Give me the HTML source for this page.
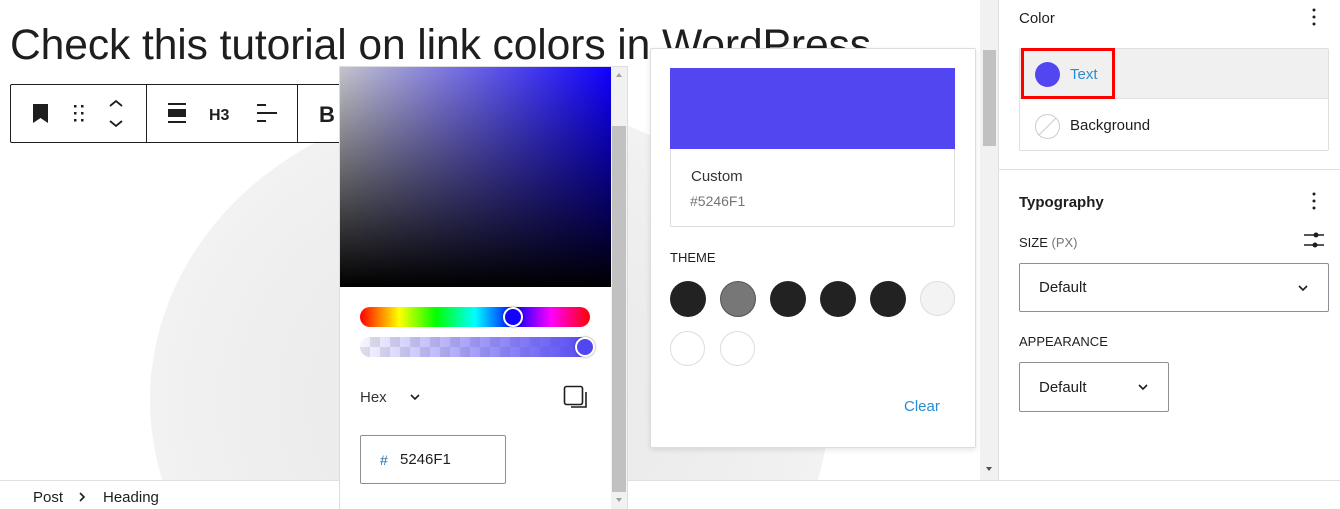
<!DOCTYPE html>
<html style="overflow:hidden;width:1340px;height:509px"><head><meta charset="utf-8"><style>
*{box-sizing:border-box;margin:0;padding:0}
body{width:1340px;height:509px;overflow:hidden;background:#fff;font-family:"Liberation Sans",sans-serif;color:#1e1e1e;position:relative}
.a{position:absolute}
.t{position:absolute;white-space:nowrap;line-height:1}
</style></head><body>
<svg class="a" style="left:0;top:0" width="980" height="480"><defs><radialGradient id="g"><stop offset="0" stop-color="#e8e8e8"/><stop offset="0.7" stop-color="#eeeeee"/><stop offset="1" stop-color="#f2f2f2"/></radialGradient></defs><ellipse cx="490" cy="400" rx="340" ry="300" fill="url(#g)"/></svg>
<div class="t" style="left:10px;top:24px;font-size:42.6px;color:#1e1e1e;letter-spacing:-0.1px">Check this tutorial on link colors in WordPress</div>
<div class="a" style="left:10px;top:84px;width:340px;height:59px;border:1px solid #1e1e1e;border-radius:2px;background:#fff"></div>
<div class="a" style="left:146px;top:84px;width:1px;height:59px;background:#1e1e1e"></div>
<div class="a" style="left:297px;top:84px;width:1px;height:59px;background:#1e1e1e"></div>
<svg class="a" style="left:0;top:84px" width="340" height="59">
<path d="M33 20h15v19l-7.5-5-7.5 5z" fill="#1e1e1e"/>
<g fill="#1e1e1e"><rect x="74" y="21" width="2.5" height="2.5"/><rect x="81" y="21" width="2.5" height="2.5"/><rect x="74" y="28" width="2.5" height="2.5"/><rect x="81" y="28" width="2.5" height="2.5"/><rect x="74" y="35" width="2.5" height="2.5"/><rect x="81" y="35" width="2.5" height="2.5"/></g>
<path d="M110 22l6-5 6 5M110 37l6 5 6-5" stroke="#1e1e1e" stroke-width="1.8" fill="none"/>
<rect x="168" y="19" width="18" height="2" fill="#1e1e1e"/><rect x="168" y="25" width="18" height="8" fill="#1e1e1e"/><rect x="168" y="37" width="18" height="2" fill="#1e1e1e"/>
<text x="209" y="36" font-family="Liberation Sans" font-weight="bold" font-size="16" fill="#1e1e1e">H3</text>
<path d="M257 21h9M257 29h20M257 37h9" stroke="#1e1e1e" stroke-width="2"/>
<text x="319" y="38" font-family="Liberation Sans" font-weight="bold" font-size="22" fill="#1e1e1e">B</text>
</svg>
<div class="a" style="left:980px;top:0;width:18px;height:480px;background:#f1f1f1"></div>
<div class="a" style="left:983px;top:50px;width:13px;height:96px;background:#c1c1c1"></div>
<svg class="a" style="left:983px;top:465px" width="12" height="8"><path d="M3 2h6l-3 4z" fill="#505050"/></svg>
<div class="a" style="left:998px;top:0;width:1px;height:480px;background:#e0e0e0"></div>
<div class="a" style="left:0;top:480px;width:1340px;height:1px;background:#e0e0e0"></div>
<div class="t" style="left:33px;top:490px;font-size:15px">Post</div>
<svg class="a" style="left:77px;top:490px" width="10" height="14"><path d="M3 3l4 4-4 4" stroke="#1e1e1e" stroke-width="1.6" fill="none"/></svg>
<div class="t" style="left:103px;top:490px;font-size:15px">Heading</div>
<div class="a" style="left:339px;top:66px;width:289px;height:443px;background:#fff;border:1px solid #ddd;border-bottom:none"></div>
<div class="a" style="left:340px;top:67px;width:271px;height:220px;background:linear-gradient(to bottom,rgba(0,0,0,0),#000),linear-gradient(to right,#c4c4cc,#0f00ff)"></div>
<div class="a" style="left:611px;top:67px;width:16px;height:442px;background:#f1f1f1"></div>
<div class="a" style="left:612px;top:126px;width:14px;height:366px;background:#c1c1c1"></div>
<svg class="a" style="left:613px;top:70px" width="12" height="10"><path d="M3 7h6l-3-4z" fill="#a0a0a0"/></svg>
<svg class="a" style="left:613px;top:495px" width="12" height="10"><path d="M3 3h6l-3 4z" fill="#a0a0a0"/></svg>
<div class="a" style="left:360px;top:307px;width:230px;height:20px;border-radius:10px;background:linear-gradient(to right,#f00,#ff0 17%,#0f0 33%,#0ff 50%,#00f 67%,#f0f 83%,#f00)"></div>
<div class="a" style="left:503px;top:307px;width:20px;height:20px;border-radius:50%;background:#1400ff;border:2px solid #fff;box-shadow:0 0 2px rgba(0,0,0,.5)"></div>
<div class="a" style="left:360px;top:337px;width:233px;height:20px;border-radius:10px;background:linear-gradient(to right,rgba(82,70,241,0.05),#5246f1),repeating-conic-gradient(#e6e6e6 0 25%,#fff 0 50%) 0 0/20px 20px"></div>
<div class="a" style="left:575px;top:337px;width:20px;height:20px;border-radius:50%;background:#5246f1;border:2px solid #fff;box-shadow:0 0 2px rgba(0,0,0,.5)"></div>
<div class="t" style="left:360px;top:390px;font-size:15px;color:#333">Hex</div>
<svg class="a" style="left:409px;top:391px" width="12" height="12"><path d="M2 4l4 4 4-4" stroke="#1e1e1e" stroke-width="1.6" fill="none"/></svg>
<svg class="a" style="left:562px;top:384px" width="28" height="28"><rect x="2.5" y="2.5" width="18" height="18" rx="2" stroke="#1e1e1e" stroke-width="1.6" fill="none"/><path d="M24 8v15h-15" stroke="#1e1e1e" stroke-width="1.6" fill="none"/></svg>
<div class="a" style="left:360px;top:435px;width:146px;height:49px;border:1px solid #8c8f94;border-radius:2px"></div>
<div class="t" style="left:380px;top:453px;font-size:14px;color:#2271b1">#</div>
<div class="t" style="left:400px;top:452px;font-size:15px;color:#1e1e1e">5246F1</div>
<div class="a" style="left:650px;top:48px;width:326px;height:400px;background:#fff;border:1px solid #ddd;border-radius:2px;box-shadow:0 2px 6px rgba(0,0,0,.1)"></div>
<div class="a" style="left:670px;top:68px;width:285px;height:159px;border:1px solid #ddd;border-radius:2px"></div>
<div class="a" style="left:670px;top:68px;width:285px;height:81px;background:#5246f1"></div>
<div class="t" style="left:691px;top:169px;font-size:15px;color:#333">Custom</div>
<div class="t" style="left:690px;top:194px;font-size:14px;color:#757575">#5246F1</div>
<div class="t" style="left:670px;top:251px;font-size:13px;color:#1e1e1e">THEME</div>
<div class="a" style="left:670px;top:281px;width:36px;height:36px;border-radius:50%;background:#222"></div>
<div class="a" style="left:720px;top:281px;width:36px;height:36px;border-radius:50%;background:#777;border:1px solid #555"></div>
<div class="a" style="left:770px;top:281px;width:36px;height:36px;border-radius:50%;background:#222"></div>
<div class="a" style="left:820px;top:281px;width:36px;height:36px;border-radius:50%;background:#222"></div>
<div class="a" style="left:870px;top:281px;width:36px;height:36px;border-radius:50%;background:#222"></div>
<div class="a" style="left:920px;top:281px;width:35px;height:35px;border-radius:50%;background:#f3f3f3;border:1px solid #ddd"></div>
<div class="a" style="left:670px;top:331px;width:35px;height:35px;border-radius:50%;background:#fff;border:1px solid #ddd"></div>
<div class="a" style="left:720px;top:331px;width:35px;height:35px;border-radius:50%;background:#fff;border:1px solid #ddd"></div>
<div class="t" style="left:904px;top:399px;font-size:15px;color:#2a8ccf">Clear</div>
<div class="t" style="left:1019px;top:11px;font-size:15px">Color</div>
<svg class="a" style="left:1308px;top:6px" width="12" height="22"><g fill="#1e1e1e"><circle cx="6" cy="4" r="1.5"/><circle cx="6" cy="11" r="1.5"/><circle cx="6" cy="18" r="1.5"/></g></svg>
<div class="a" style="left:1019px;top:48px;width:310px;height:103px;border:1px solid #e0e0e0;border-radius:2px"></div>
<div class="a" style="left:1020px;top:49px;width:308px;height:50px;background:#f0f0f0;border-bottom:1px solid #e0e0e0"></div>
<div class="a" style="left:1021px;top:48px;width:94px;height:51px;border:3px solid #f00"></div>
<div class="a" style="left:1035px;top:62px;width:25px;height:25px;border-radius:50%;background:#5246f1"></div>
<div class="t" style="left:1070px;top:67px;font-size:15px;color:#2a8ccf">Text</div>
<svg class="a" style="left:1034px;top:113px" width="27" height="27"><circle cx="13.5" cy="13.5" r="12" fill="#fff" stroke="#ccc" stroke-width="1"/><path d="M5 22L22 5" stroke="#ccc" stroke-width="1"/></svg>
<div class="t" style="left:1070px;top:118px;font-size:15px">Background</div>
<div class="a" style="left:999px;top:169px;width:341px;height:1px;background:#e0e0e0"></div>
<div class="t" style="left:1019px;top:195px;font-size:15px;font-weight:bold">Typography</div>
<svg class="a" style="left:1308px;top:190px" width="12" height="22"><g fill="#1e1e1e"><circle cx="6" cy="4" r="1.5"/><circle cx="6" cy="11" r="1.5"/><circle cx="6" cy="18" r="1.5"/></g></svg>
<div class="t" style="left:1019px;top:236px;font-size:13px">SIZE <span style="color:#757575">(PX)</span></div>
<svg class="a" style="left:1302px;top:230px" width="24" height="22"><path d="M2 5h20M2 15h20" stroke="#1e1e1e" stroke-width="1.6"/><circle cx="14" cy="5" r="2.5" fill="#1e1e1e"/><circle cx="13" cy="15" r="2.5" fill="#1e1e1e"/></svg>
<div class="a" style="left:1019px;top:263px;width:310px;height:49px;border:1px solid #8c8f94;border-radius:2px"></div>
<div class="t" style="left:1039px;top:280px;font-size:15px">Default</div>
<svg class="a" style="left:1297px;top:283px" width="12" height="10"><path d="M2 3l4 4 4-4" stroke="#1e1e1e" stroke-width="1.6" fill="none"/></svg>
<div class="t" style="left:1019px;top:335px;font-size:13px">APPEARANCE</div>
<div class="a" style="left:1019px;top:362px;width:150px;height:50px;border:1px solid #8c8f94;border-radius:2px"></div>
<div class="t" style="left:1039px;top:380px;font-size:15px">Default</div>
<svg class="a" style="left:1137px;top:382px" width="12" height="10"><path d="M2 3l4 4 4-4" stroke="#1e1e1e" stroke-width="1.6" fill="none"/></svg>
</body></html>
